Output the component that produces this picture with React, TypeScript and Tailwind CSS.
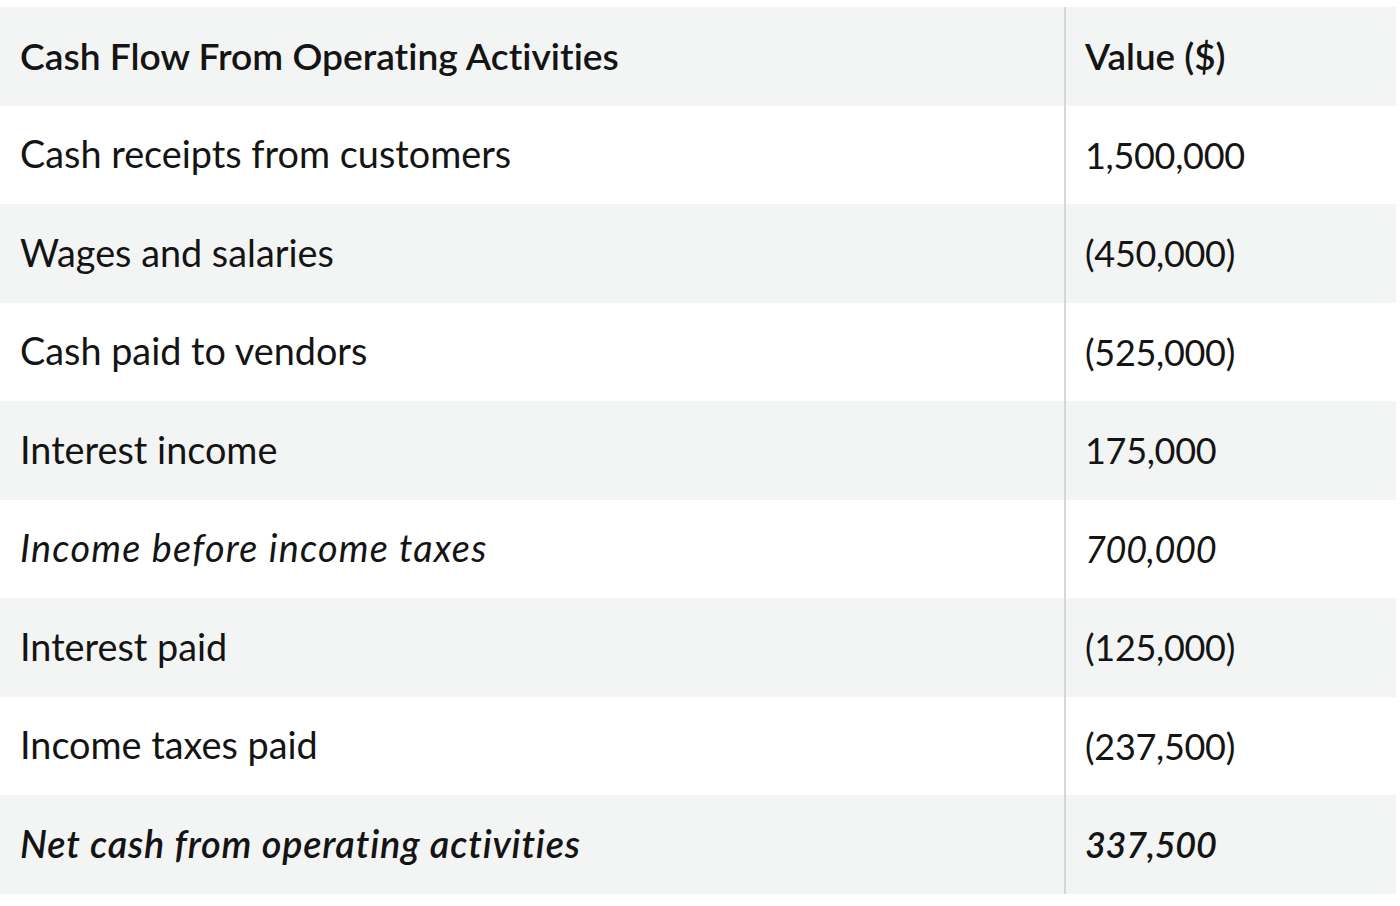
import React from "react";

type Row = { label: string; value: string; kind?: "italic" | "bolditalic" };

const rows: Row[] = [
  { label: "Cash receipts from customers", value: "1,500,000" },
  { label: "Wages and salaries", value: "(450,000)" },
  { label: "Cash paid to vendors", value: "(525,000)" },
  { label: "Interest income", value: "175,000" },
  { label: "Income before income taxes", value: "700,000", kind: "italic" },
  { label: "Interest paid", value: "(125,000)" },
  { label: "Income taxes paid", value: "(237,500)" },
  { label: "Net cash from operating activities", value: "337,500", kind: "bolditalic" },
];

export default function App() {
  return (
    <div
      className="w-[1400px] h-[906px] bg-white pt-[7px] text-[#141414] [font-variant-ligatures:none]"
      style={{ fontFamily: "Lato, 'Noto Sans', sans-serif" }}
    >
      <table className="w-[1396px] border-collapse">
        <thead>
          <tr className="h-[98.5px] bg-[#f3f5f4]">
            <th className="w-[1065px] pl-[20px] text-left align-middle text-[37.2px] font-semibold">Cash Flow From Operating Activities</th>
            <th className="border-l-2 border-[#d6d8d7] pl-[19px] text-left align-middle text-[36.8px] font-semibold">Value ($)</th>
          </tr>
        </thead>
        <tbody>
          {rows.map((r, i) => {
            const labelCls =
              r.kind === "italic"
                ? "italic font-normal tracking-[1.25px]"
                : r.kind === "bolditalic"
                ? "italic font-semibold tracking-[0.82px]"
                : "font-normal";
            const valueCls =
              r.kind === "italic" ? "italic font-normal" : r.kind === "bolditalic" ? "italic font-semibold" : "font-normal";
            return (
              <tr key={i} className={`h-[98.5px] ${i % 2 === 1 ? "bg-[#f3f5f4]" : "bg-white"}`}>
                <td className={`pl-[20px] align-middle text-[37.8px] ${labelCls}`}>{r.label}</td>
                <td className={`border-l-2 border-[#d6d8d7] pl-[19px] align-middle text-[36px] tracking-[-0.3px] ${valueCls}`}>{r.value}</td>
              </tr>
            );
          })}
        </tbody>
      </table>
    </div>
  );
}
